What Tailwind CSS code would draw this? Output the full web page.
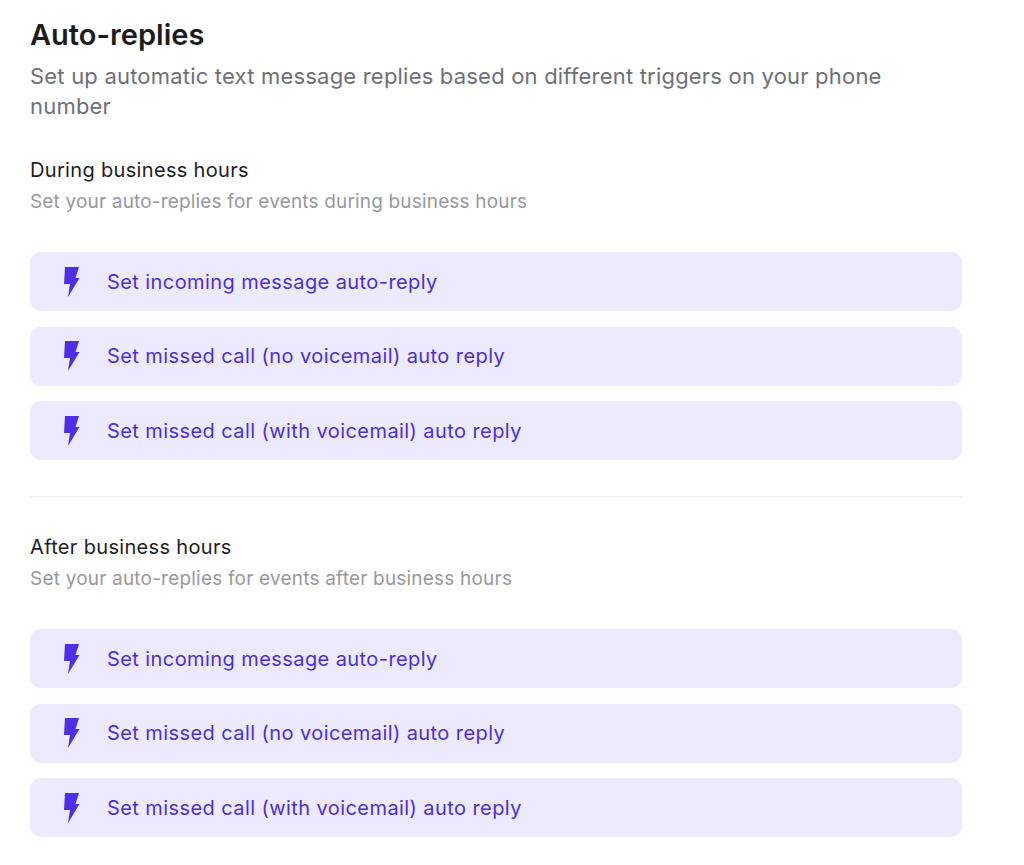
<!DOCTYPE html>
<html lang="en">
<head>
  <meta charset="UTF-8" />
  <title>Auto-replies</title>
  <script src="https://cdn.jsdelivr.net/npm/@tailwindcss/browser@4"></script>
</head>
<body class="bg-white font-['Inter',sans-serif] overflow-hidden">
  <div class="w-[932px] ml-[30px] pt-[17px]">
    <h1 class="text-[29px] leading-[36px] font-semibold text-[#1c1c1f]">Auto-replies</h1>
    <p class="mt-[8px] text-[22px] leading-[30px] tracking-[0.2px] text-[#6f6f76]">Set up automatic text message replies based on different triggers on your phone number</p>

    <h2 class="mt-[34px] text-[20px] leading-[30px] tracking-[0.33px] text-[#1c1c1f]">During business hours</h2>
    <p class="mt-[2px] text-[19px] leading-[30px] tracking-[0.17px] text-[#98989e]">Set your auto-replies for events during business hours</p>
    <div class="mt-[35px] flex flex-col gap-[15.5px]">
      <div class="h-[59px] flex items-center pl-[34px] gap-[27px] bg-[#ede9fe] rounded-[11px] text-[20px] tracking-[0.42px] text-[#4b2fd4]">
        <svg class="w-[16px] h-[30px] shrink-0" viewBox="0 0 16 30" fill="#4f2ee8"><path d="M1 0h14l-3.500 11h4L4 30l2-13H0z"/></svg>
        <span>Set incoming message auto-reply</span>
      </div>
      <div class="h-[59px] flex items-center pl-[34px] gap-[27px] bg-[#ede9fe] rounded-[11px] text-[20px] tracking-[0.42px] text-[#4b2fd4]">
        <svg class="w-[16px] h-[30px] shrink-0" viewBox="0 0 16 30" fill="#4f2ee8"><path d="M1 0h14l-3.500 11h4L4 30l2-13H0z"/></svg>
        <span>Set missed call (no voicemail) auto reply</span>
      </div>
      <div class="h-[59px] flex items-center pl-[34px] gap-[27px] bg-[#ede9fe] rounded-[11px] text-[20px] tracking-[0.42px] text-[#4b2fd4]">
        <svg class="w-[16px] h-[30px] shrink-0" viewBox="0 0 16 30" fill="#4f2ee8"><path d="M1 0h14l-3.500 11h4L4 30l2-13H0z"/></svg>
        <span>Set missed call (with voicemail) auto reply</span>
      </div>
    </div>

    <hr class="mt-[36px] border-[#ebebee]" />

    <h2 class="mt-[35px] text-[20px] leading-[30px] tracking-[0.33px] text-[#1c1c1f]">After business hours</h2>
    <p class="mt-[2px] text-[19px] leading-[30px] tracking-[0.2px] text-[#98989e]">Set your auto-replies for events after business hours</p>
    <div class="mt-[35px] flex flex-col gap-[15.5px]">
      <div class="h-[59px] flex items-center pl-[34px] gap-[27px] bg-[#ede9fe] rounded-[11px] text-[20px] tracking-[0.42px] text-[#4b2fd4]">
        <svg class="w-[16px] h-[30px] shrink-0" viewBox="0 0 16 30" fill="#4f2ee8"><path d="M1 0h14l-3.500 11h4L4 30l2-13H0z"/></svg>
        <span>Set incoming message auto-reply</span>
      </div>
      <div class="h-[59px] flex items-center pl-[34px] gap-[27px] bg-[#ede9fe] rounded-[11px] text-[20px] tracking-[0.42px] text-[#4b2fd4]">
        <svg class="w-[16px] h-[30px] shrink-0" viewBox="0 0 16 30" fill="#4f2ee8"><path d="M1 0h14l-3.500 11h4L4 30l2-13H0z"/></svg>
        <span>Set missed call (no voicemail) auto reply</span>
      </div>
      <div class="h-[59px] flex items-center pl-[34px] gap-[27px] bg-[#ede9fe] rounded-[11px] text-[20px] tracking-[0.42px] text-[#4b2fd4]">
        <svg class="w-[16px] h-[30px] shrink-0" viewBox="0 0 16 30" fill="#4f2ee8"><path d="M1 0h14l-3.500 11h4L4 30l2-13H0z"/></svg>
        <span>Set missed call (with voicemail) auto reply</span>
      </div>
    </div>
  </div>
</body>
</html>
